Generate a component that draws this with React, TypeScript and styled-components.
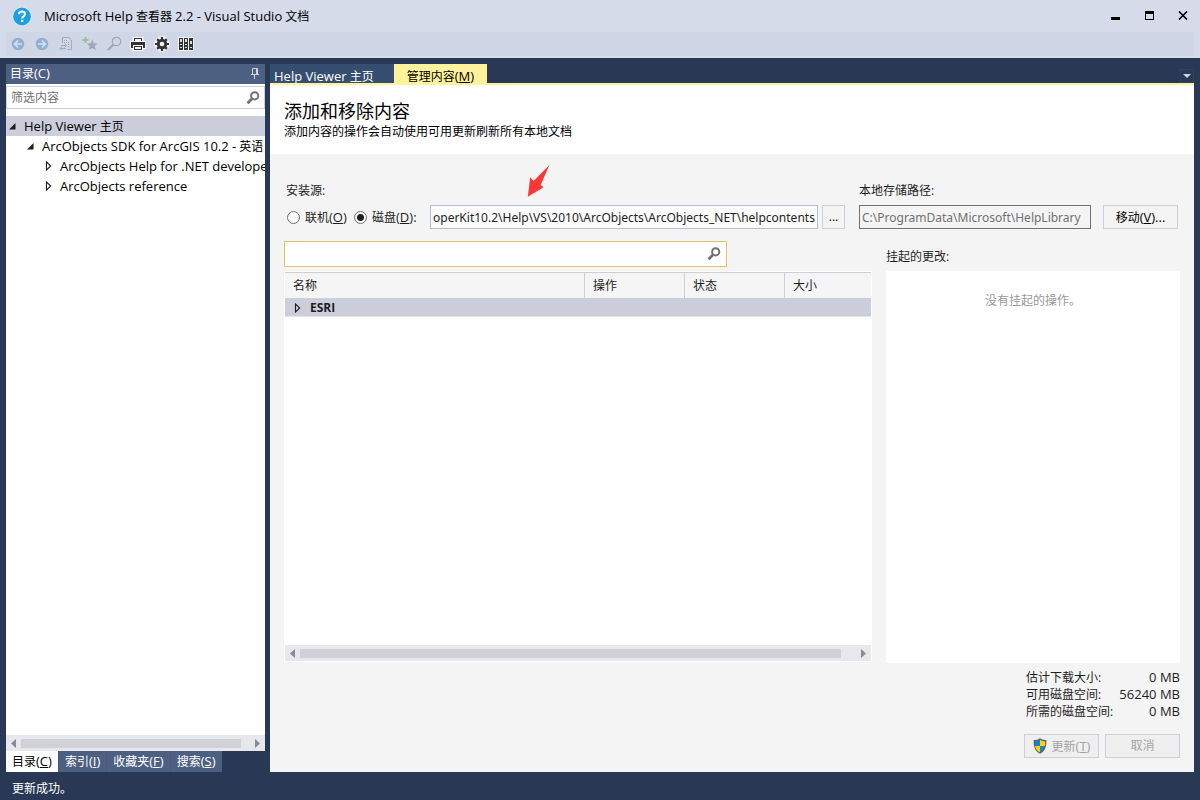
import React, { useState } from "react";
import styled, { createGlobalStyle, css } from "styled-components";

const navy = "#293955";
const line = "#cccedb";

const GlobalStyle = createGlobalStyle`
  * { box-sizing: border-box; }
  body { margin: 0; background: ${navy}; }
  body, button, input, table {
    font-family: "Open Sans", "Noto Sans CJK SC", sans-serif;
    font-size: 12px;
    line-height: 16px;
    color: #1e1e1e;
  }
  button { padding: 0; border: 0; background: none; white-space: nowrap; }
  h1, h2, p, ul, dl, dd, dt, fieldset, legend { margin: 0; padding: 0; }
  svg { display: block; flex: none; }
`;

const Latin = styled.span`
  font-size: 13px;
`;

const Window = styled.div`
  min-height: 100vh;
  display: flex;
  flex-direction: column;
  background: ${navy};
`;

const Header = styled.header`
  background: #d6dbe9;
  padding-bottom: 2px;
`;

const TitleBar = styled.div`
  height: 32px;
  display: flex;
  align-items: center;
  gap: 12px;
  padding-left: 12px;
`;

const Title = styled.h1`
  flex: 1;
  font-size: 12px;
  font-weight: 400;
  color: #000;
`;

const WindowControls = styled.div`
  display: flex;
  align-self: flex-start;
`;

const WindowButton = styled.button`
  width: 34px;
  height: 30px;
  display: grid;
  place-items: center;
`;

const Toolbar = styled.div`
  display: flex;
  align-items: center;
  gap: 8px;
  height: 24px;
  margin: 0 6px;
  padding: 0 4px;
  background: #cfd6e5;
`;

const ToolButton = styled.button`
  width: 16px;
  height: 16px;
`;

const Workspace = styled.div`
  flex: 1;
  display: grid;
  grid-template-columns: 259px minmax(0, 1fr);
  gap: 5px;
  padding: 6px 6px 0;
`;

const Sidebar = styled.aside`
  display: flex;
  flex-direction: column;
  min-width: 0;
`;

const PanelHeader = styled.div`
  display: flex;
  align-items: center;
  justify-content: space-between;
  height: 20px;
  padding: 0 4px 2px;
  background: #4d6082;
  color: #fff;
`;

const PanelTitle = styled.h2`
  font-size: 12px;
  font-weight: 400;
`;

const PanelBody = styled.div`
  flex: 1;
  display: flex;
  flex-direction: column;
  padding-top: 2px;
  background: #fff;
`;

const SearchBox = styled.label<{ $accent?: boolean }>`
  display: flex;
  align-items: center;
  height: ${(p) => (p.$accent ? "26px" : "23px")};
  padding: ${(p) => (p.$accent ? "0 5px" : "0 4px")};
  background: #fff;
  border: 1px solid ${(p) => (p.$accent ? "#e5c365" : line)};
`;

const SearchInput = styled.input`
  flex: 1;
  min-width: 0;
  padding: 0;
  border: 0;
  outline: 0;
  background: transparent;
  &::placeholder { color: #717171; opacity: 1; }
`;

const Tree = styled.ul`
  flex: 1;
  margin-top: 7px;
  list-style: none;
`;

const TreeItem = styled.button<{ $level: number; $selected?: boolean }>`
  display: flex;
  align-items: center;
  gap: 7px;
  width: 100%;
  height: 20px;
  padding-left: ${(p) => p.$level * 18 + 1}px;
  overflow: hidden;
  color: #000;
  background: ${(p) => (p.$selected ? line : "transparent")};
`;

const ScrollTrack = styled.div`
  display: flex;
  align-items: center;
  justify-content: space-between;
  height: 16px;
  padding: 0 5px;
  background: #e8e8ec;
`;

const ScrollThumb = styled.div<{ $end: number }>`
  flex: 1;
  height: 9px;
  margin: 0 ${(p) => p.$end}px 0 5px;
  background: #d0d1d7;
`;

const PanelTabs = styled.div`
  display: flex;
  height: 21px;
`;

const PanelTab = styled.button<{ $active?: boolean }>`
  padding: 0 6px;
  background: ${(p) => (p.$active ? "#fff" : "#4d6082")};
  color: ${(p) => (p.$active ? "#000" : "#fff")};
  & + & { border-left: 1px solid #465a7d; }
`;

const Document = styled.main`
  display: flex;
  flex-direction: column;
  min-width: 0;
`;

const DocTabs = styled.div`
  display: flex;
  align-items: flex-end;
  height: 21px;
  border-bottom: 2px solid #fff29d;
`;

const DocTab = styled.button<{ $active?: boolean }>`
  height: 19px;
  padding: ${(p) => (p.$active ? "5px 13px 0" : "5px 20px 0 4px")};
  line-height: 14px;
  background: ${(p) => (p.$active ? "#fff29d" : "#364e6f")};
  color: ${(p) => (p.$active ? "#000" : "#fff")};
`;

const TabMenuButton = styled.button`
  width: 14px;
  height: 14px;
  margin-left: auto;
  border: 1px solid #2f4160;
  display: grid;
  place-items: center;
`;

const Intro = styled.section`
  height: 69px;
  padding: 14px 14px 0;
  background: #fff;
  color: #000;
`;

const IntroTitle = styled.h2`
  font-size: 18px;
  line-height: 25px;
  font-weight: 400;
`;

const Manage = styled.section`
  flex: 1;
  display: flex;
  flex-direction: column;
  padding: 28px 14px 14px;
  background: #f4f4f4;
`;

const Settings = styled.div`
  display: flex;
  gap: 14px;
  padding-right: 2px;
`;

const SourceGroup = styled.fieldset`
  position: relative;
  flex: 1;
  min-width: 0;
  border: 0;
`;

const StorageGroup = styled.div`
  flex: 0 0 319px;
`;

const GroupLabel = styled.label<{ $indent?: boolean }>`
  display: block;
  height: 23px;
  padding-top: 1px;
  padding-left: ${(p) => (p.$indent ? "2px" : "0")};
`;

const ControlRow = styled.div<{ $gap: number }>`
  display: flex;
  align-items: center;
  gap: ${(p) => p.$gap}px;
`;

const RadioLabel = styled.label<{ $wide?: boolean }>`
  display: flex;
  align-items: center;
  gap: 5px;
  flex: 0 0 ${(p) => (p.$wide ? "72px" : "66px")};
  padding-left: ${(p) => (p.$wide ? "0" : "3px")};
  white-space: nowrap;
`;

const Radio = styled.input`
  appearance: none;
  flex: none;
  width: 13px;
  height: 13px;
  margin: 0;
  border: 1px solid #717171;
  border-radius: 50%;
  background: #fcfcfc;
  &:checked { background: radial-gradient(circle, #1e1e1e 3px, #fcfcfc 4px); }
`;

const PathInput = styled.input`
  flex: 1;
  min-width: 0;
  height: 24px;
  padding: 0 2px;
  border: 1px solid #b4bdd0;
  background: #fcfcfc;
  outline: 0;
  font-family: "Noto Sans", "Noto Sans CJK SC", sans-serif;
  &:disabled {
    color: #717171;
    border-color: #717171;
    background: #f4f4f4;
  }
`;

const PushButton = styled.button<{ $small?: boolean }>`
  display: flex;
  align-items: center;
  justify-content: center;
  gap: 5px;
  width: ${(p) => (p.$small ? "23px" : "75px")};
  height: 24px;
  flex: none;
  border: 1px solid ${line};
  background: #f4f4f4;
  color: #000;
  &:disabled { color: #a2a4a5; background: #efeff0; }
`;

const Pointer = styled.svg`
  position: absolute;
  left: 243px;
  top: -18px;
`;

const Columns = styled.div`
  flex: 1;
  display: grid;
  grid-template-columns: minmax(0, 1fr) 294px;
  gap: 14px;
  margin-top: 12px;
`;

const Catalog = styled.div`
  display: flex;
  flex-direction: column;
  padding-bottom: 96px;
`;

const CatalogSearch = styled.div`
  width: 443px;
  max-width: 100%;
  margin-bottom: 4px;
`;

const Listing = styled.div`
  flex: 1;
  display: flex;
  flex-direction: column;
  border: 1px solid #fff;
  background: #fff;
`;

const Table = styled.table`
  width: 100%;
  table-layout: fixed;
  border-collapse: separate;
  border-spacing: 0;
`;

const Th = styled.th<{ $width?: number }>`
  ${(p) => p.$width && css`width: ${p.$width}px;`}
  height: 26px;
  padding: 0 0 0 8px;
  text-align: left;
  font-weight: 400;
  background: #f5f5f5;
  border-top: 1px solid ${line};
  border-right: 1px solid ${line};
  &:last-child { border-right: 0; }
`;

const Vendor = styled.td`
  height: 19px;
  padding: 0 0 0 7px;
  background: ${line};
  border-bottom: 1px solid #e4e5ec;
`;

const VendorToggle = styled.button`
  display: flex;
  align-items: center;
  gap: 8px;
  height: 18px;
  padding-top: 2px;
  font-weight: 700;
`;

const Grow = styled.div`
  flex: 1;
`;

const Pending = styled.div`
  display: flex;
  flex-direction: column;
  padding-top: 8px;
`;

const PendingList = styled.div`
  flex: 1;
  margin-top: 6px;
  padding-top: 22px;
  background: #fff;
  color: #999;
  text-align: center;
`;

const Stats = styled.dl`
  display: grid;
  grid-template-columns: auto 1fr;
  width: 154px;
  margin: 6px 0 0 auto;
  line-height: 17px;
  dd { text-align: right; height: 17px; font-size: 13px; }
  dt { height: 17px; white-space: nowrap; }
`;

const Actions = styled.div`
  display: flex;
  justify-content: flex-end;
  gap: 6px;
  margin-top: 14px;
`;

const StatusBar = styled.footer`
  height: 28px;
  padding: 9px 12px 0;
  color: #fff;
`;

const Expanded = () => (
  <svg width="10" height="10" viewBox="0 0 10 10" aria-hidden="true">
    <path d="M8.500 2v6.500H2z" fill="#1e1e1e" />
  </svg>
);

const Collapsed = () => (
  <svg width="10" height="10" viewBox="0 0 10 10" aria-hidden="true">
    <path d="M3.500 1v8l4.200-4z" fill="none" stroke="#1e1e1e" strokeWidth="1.100" />
  </svg>
);

const ArrowLeft = () => (
  <svg width="5" height="9" viewBox="0 0 5 9" aria-hidden="true">
    <path d="M5 0v9L0 4.500z" fill="#868999" />
  </svg>
);

const ArrowRight = () => (
  <svg width="5" height="9" viewBox="0 0 5 9" aria-hidden="true">
    <path d="M0 0v9l5-4.500z" fill="#868999" />
  </svg>
);

const Magnifier = () => (
  <svg width="14" height="14" viewBox="0 0 14 14" fill="none" stroke="#717171" aria-hidden="true">
    <circle cx="8.700" cy="4.800" r="3.600" strokeWidth="2" />
    <path d="M6.200 7.500L1.500 12.200" strokeWidth="2.700" />
  </svg>
);

const HelpLogo = () => (
  <svg width="20" height="20" viewBox="0 0 20 20" aria-hidden="true">
    <circle cx="10" cy="10.500" r="9.500" fill="#e9f3fb" />
    <circle cx="10" cy="10.500" r="8.900" fill="#1ba1e2" />
    <path d="M7 8.300C7 6.400 8.300 5.500 10 5.500s3 1 3 2.600c0 2.200-2.900 2.300-2.900 4.500" fill="none" stroke="#fff" strokeWidth="2.200" />
    <path d="M9 13.800h2.300V16H9z" fill="#fff" />
  </svg>
);

const Pin = () => (
  <svg width="12" height="12" viewBox="0 0 12 12" fill="none" stroke="#ced4dd" aria-hidden="true">
    <path d="M3.500 7.500V1.500h5v6M2 7.500h8M5.500 7.500V12M7.500 1.500v6" />
  </svg>
);

const Shield = () => (
  <svg width="14" height="16" viewBox="0 0 14 16" aria-hidden="true">
    <path d="M7 1c1.800 1.300 3.600 1.700 5.700 1.700.3 5.500-.9 9.800-5.700 12.300C2.200 12.500 1 8.200 1.300 2.700 3.400 2.700 5.200 2.300 7 1z" fill="#1e82d2" stroke="#5b6066" strokeWidth="1.300" />
    <path d="M7 1.800V8H2c-.2-1.400-.2-3-.1-4.600C4 3.300 5.500 2.900 7 1.800z" fill="#1581cf" />
    <path d="M7 1.800V8h5c.2-1.400.2-3 .1-4.600-2.100-.1-3.600-.5-5.100-1.600z" fill="#fdd20a" />
    <path d="M7 8H2c.5 2.800 2 5 5 6.400z" fill="#fdd20a" />
  </svg>
);

const circleArrow = (flip: boolean) => (
  <svg width="16" height="16" viewBox="0 0 16 16" aria-hidden="true">
    <circle cx="8" cy="8" r="6.200" fill="#8fb0d3" />
    <path
      d={flip ? "M4 8h7M8 4.500L11.500 8 8 11.500" : "M12 8H5M8 4.500L4.500 8 8 11.500"}
      fill="none"
      stroke="#d9e0ee"
      strokeWidth="1.700"
    />
  </svg>
);

const tools: { label: string; icon: React.ReactNode }[] = [
  { label: "后退", icon: circleArrow(false) },
  { label: "前进", icon: circleArrow(true) },
  {
    label: "同步目录",
    icon: (
      <svg width="16" height="16" viewBox="0 0 16 16" fill="none" aria-hidden="true">
        <path d="M4.500 7V1.500h6L13.500 4v9.500h-4" stroke="#a3abbb" />
        <path d="M6 4.500h4M6 6.500h6M10 8.500h2M10 10.500h2" stroke="#a3abbb" strokeDasharray="1 1" />
        <path d="M3 9.500h5M6.500 7.500l2 2-2 2M8 12.500H2M4 10.500l-2 2 2 2" stroke="#8fb0d3" />
      </svg>
    ),
  },
  {
    label: "添加到收藏夹",
    icon: (
      <svg width="16" height="16" viewBox="0 0 16 16" aria-hidden="true">
        <path d="M2.500 1h2v2h2v2h-2v2h-2V5h-2V3h2z" fill="#9bbfa5" />
        <path d="M10.200 3.500l1.500 3.700 4 .3-3 2.600 1 3.900-3.500-2.100L6.700 14l1-3.900-3-2.600 4-.3z" fill="#a0a7b6" />
      </svg>
    ),
  },
  {
    label: "查找",
    icon: (
      <svg width="16" height="16" viewBox="0 0 16 16" fill="none" stroke="#a0a7b6" aria-hidden="true">
        <circle cx="10.500" cy="5.500" r="4.200" strokeWidth="1.300" />
        <path d="M7.500 8.500L2 14" strokeWidth="2.200" />
      </svg>
    ),
  },
  {
    label: "打印",
    icon: (
      <svg width="16" height="16" viewBox="0 0 16 16" aria-hidden="true">
        <path d="M2.500 1h11v4H16v8h-2.500v2h-11v-2H0V5h2.500z" fill="#f3f5fa" />
        <path d="M4 2h8v3H4zM1 6h14v6H1zM4 10h8v4H4z" fill="#333" />
        <path d="M5 3h6v2H5zM3 9h10v1H4v2H3zM12 9h1v3h-1zM5 11h6v2H5z" fill="#f3f5fa" />
      </svg>
    ),
  },
  {
    label: "设置",
    icon: (
      <svg width="16" height="16" viewBox="0 0 16 16" aria-hidden="true">
        <circle cx="8" cy="8" r="7.900" fill="#f0f2f8" />
        <path d="M8 1v14M1 8h14M3.100 3.100l9.800 9.800M12.900 3.100l-9.800 9.800" stroke="#333" strokeWidth="2.200" />
        <circle cx="8" cy="8" r="5.200" fill="#333" />
        <circle cx="8" cy="8" r="2.300" fill="#f0f2f8" />
      </svg>
    ),
  },
  {
    label: "管理内容",
    icon: (
      <svg width="16" height="16" viewBox="0 0 16 16" aria-hidden="true">
        <path d="M0 1h16v14H0z" fill="#f0f2f8" />
        <path d="M1 2h4v12H1zM6 2h4v12H6zM11 2h4v12h-4z" fill="#333" />
        <path d="M2 3h2v3H2zM7 3h2v3H7zM12 5h2v3h-2zM2 8h2v1H2zM7 8h2v1H7zM2 11h2v1H2zM7 11h2v1H7zM12 11h2v1h-2z" fill="#d6dae4" />
      </svg>
    ),
  },
];

const treeItems = [
  { level: 0, open: true, label: <><Latin>Help Viewer</Latin> 主页</> },
  { level: 1, open: true, label: <><Latin>ArcObjects SDK for ArcGIS 10.2 -</Latin> 英语</> },
  { level: 2, open: false, label: <Latin>ArcObjects Help for .NET develope</Latin> },
  { level: 2, open: false, label: <Latin>ArcObjects reference</Latin> },
];

const panelTabs = [
  ["目录", "C"],
  ["索引", "I"],
  ["收藏夹", "F"],
  ["搜索", "S"],
];

const stats = [
  ["估计下载大小:", "0 MB"],
  ["可用磁盘空间:", "56240 MB"],
  ["所需的磁盘空间:", "0 MB"],
];

function Hotkey({ letter, after = "" }: { letter: string; after?: string }) {
  return <Latin>(<u>{letter}</u>){after}</Latin>;
}

function HorizontalScroll({ end }: { end: number }) {
  return (
    <ScrollTrack>
      <button aria-label="向左滚动"><ArrowLeft /></button>
      <ScrollThumb $end={end} />
      <button aria-label="向右滚动"><ArrowRight /></button>
    </ScrollTrack>
  );
}

export default function App() {
  const [source, setSource] = useState("disk");
  const [path, setPath] = useState("operKit10.2\\Help\\VS\\2010\\ArcObjects\\ArcObjects_NET\\helpcontents");

  return (
    <Window>
      <GlobalStyle />
      <Header>
        <TitleBar>
          <HelpLogo />
          <Title>
            <Latin>Microsoft Help</Latin> 查看器 <Latin>2.2 - Visual Studio</Latin> 文档
          </Title>
          <WindowControls>
            <WindowButton aria-label="最小化">
              <svg width="9" height="9"><path d="M0 6h9v3H0z" /></svg>
            </WindowButton>
            <WindowButton aria-label="最大化">
              <svg width="9" height="9"><path fillRule="evenodd" d="M0 0h9v9H0zM1 3v5h7V3z" /></svg>
            </WindowButton>
            <WindowButton aria-label="关闭">
              <svg width="10" height="9" stroke="#000" strokeWidth="1.600"><path d="M1 .5l8 8M9 .5l-8 8" /></svg>
            </WindowButton>
          </WindowControls>
        </TitleBar>
        <Toolbar>
          {tools.map((t) => (
            <ToolButton key={t.label} aria-label={t.label}>{t.icon}</ToolButton>
          ))}
        </Toolbar>
      </Header>

      <Workspace>
        <Sidebar>
          <PanelHeader>
            <PanelTitle>目录<Latin>(C)</Latin></PanelTitle>
            <button aria-label="自动隐藏"><Pin /></button>
          </PanelHeader>
          <PanelBody>
            <SearchBox>
              <SearchInput placeholder="筛选内容" aria-label="筛选内容" />
              <Magnifier />
            </SearchBox>
            <Tree>
              {treeItems.map((item, i) => (
                <li key={i}>
                  <TreeItem $level={item.level} $selected={i === 0} aria-expanded={item.open}>
                    {item.open ? <Expanded /> : <Collapsed />}
                    <span>{item.label}</span>
                  </TreeItem>
                </li>
              ))}
            </Tree>
            <HorizontalScroll end={14} />
          </PanelBody>
          <PanelTabs>
            {panelTabs.map(([name, key], i) => (
              <PanelTab key={key} $active={i === 0}>{name}<Hotkey letter={key} /></PanelTab>
            ))}
          </PanelTabs>
        </Sidebar>

        <Document>
          <DocTabs>
            <DocTab><Latin>Help Viewer</Latin> 主页</DocTab>
            <DocTab $active>管理内容<Hotkey letter="M" /></DocTab>
            <TabMenuButton aria-label="活动文件">
              <svg width="8" height="4"><path d="M0 0h8L4 4z" fill="#ced4dd" /></svg>
            </TabMenuButton>
          </DocTabs>
          <Intro>
            <IntroTitle>添加和移除内容</IntroTitle>
            <p>添加内容的操作会自动使用可用更新刷新所有本地文档</p>
          </Intro>
          <Manage>
            <Settings>
              <SourceGroup aria-labelledby="source-label">
                <GroupLabel as="div" $indent id="source-label">安装源:</GroupLabel>
                <ControlRow $gap={4}>
                  <RadioLabel>
                    <Radio type="radio" name="source" checked={source === "online"} onChange={() => setSource("online")} />
                    <span>联机<Hotkey letter="O" /></span>
                  </RadioLabel>
                  <RadioLabel $wide>
                    <Radio type="radio" name="source" checked={source === "disk"} onChange={() => setSource("disk")} />
                    <span>磁盘<Hotkey letter="D" after=":" /></span>
                  </RadioLabel>
                  <PathInput aria-label="磁盘路径" value={path} onChange={(e) => setPath(e.target.value)} />
                  <PushButton $small>...</PushButton>
                </ControlRow>
                <Pointer width="24" height="34" viewBox="0 0 24 34" aria-hidden="true">
                  <path d="M22.500 1L6.500 17 3.200 13.300.8 32.800l15.800-9.500-3-2.300z" fill="#fb3636" />
                </Pointer>
              </SourceGroup>
              <StorageGroup>
                <GroupLabel htmlFor="storage">本地存储路径:</GroupLabel>
                <ControlRow $gap={12}>
                  <PathInput id="storage" disabled value="C:\ProgramData\Microsoft\HelpLibrary" readOnly />
                  <PushButton><span>移动<Hotkey letter="V" after="..." /></span></PushButton>
                </ControlRow>
              </StorageGroup>
            </Settings>

            <Columns>
              <Catalog>
                <CatalogSearch>
                  <SearchBox $accent>
                    <SearchInput aria-label="搜索内容" />
                    <Magnifier />
                  </SearchBox>
                </CatalogSearch>
                <Listing>
                  <Table>
                    <thead>
                      <tr>
                        <Th>名称</Th>
                        <Th $width={100}>操作</Th>
                        <Th $width={100}>状态</Th>
                        <Th $width={86}>大小</Th>
                      </tr>
                    </thead>
                    <tbody>
                      <tr>
                        <Vendor colSpan={4}>
                          <VendorToggle aria-expanded={false}><Collapsed />ESRI</VendorToggle>
                        </Vendor>
                      </tr>
                    </tbody>
                  </Table>
                  <Grow />
                  <HorizontalScroll end={20} />
                </Listing>
              </Catalog>
              <Pending>
                <PanelTitle>挂起的更改:</PanelTitle>
                <PendingList>没有挂起的操作。</PendingList>
                <Stats>
                  {stats.map(([name, value]) => (
                    <React.Fragment key={name}>
                      <dt>{name}</dt>
                      <dd>{value}</dd>
                    </React.Fragment>
                  ))}
                </Stats>
                <Actions>
                  <PushButton disabled><Shield /><span>更新<Hotkey letter="T" /></span></PushButton>
                  <PushButton disabled>取消</PushButton>
                </Actions>
              </Pending>
            </Columns>
          </Manage>
        </Document>
      </Workspace>
      <StatusBar>更新成功。</StatusBar>
    </Window>
  );
}
